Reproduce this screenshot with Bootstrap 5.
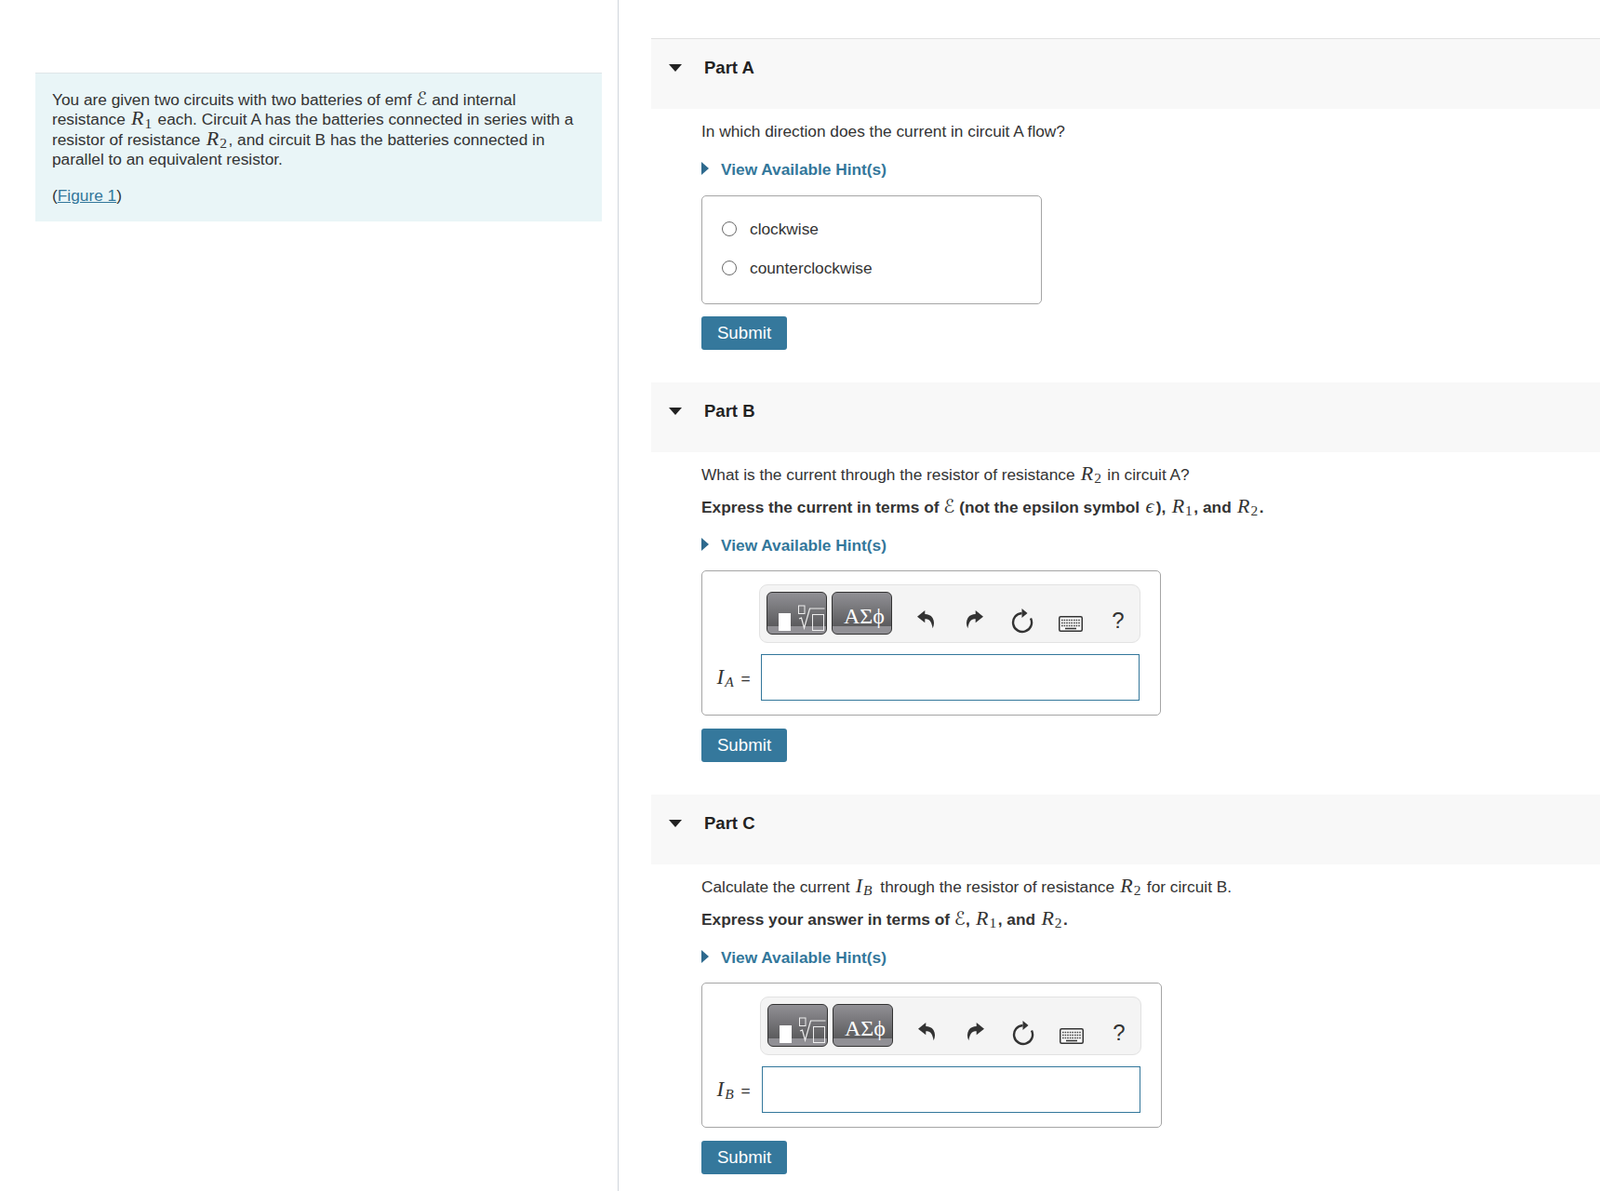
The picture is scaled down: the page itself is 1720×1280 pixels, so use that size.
<!DOCTYPE html>
<html lang="en">
<head>
    <meta charset="UTF-8">
    <meta name="viewport" content="width=device-width, initial-scale=1.0">
    <title>Circuits</title>
    <link rel="stylesheet" href="https://cdn.jsdelivr.net/npm/bootstrap@5.3.0/dist/css/bootstrap.min.css">
    <style>
        body { font-family: "Liberation Sans", Arial, sans-serif; font-size: 17.3px; color: #333; background: #fff; }
        .page-wrap { height: 1280px; overflow: hidden; }
        .left-col { width: 665px; flex: none; border-right: 1px solid #d0d5dc; padding: 78px 17px 0 38px; }
        .intro-box { background: #e9f5f7; border-top: 1px solid #dfe5e8; padding: 18px 17px 14px 18px; height: 160px; line-height: 21.4px; }
        .intro-box p { margin: 0 0 17px; }
        .intro-box a { color: #33779b; }
        .right-col { padding: 41px 0 0 35px; min-width: 0; }
        .part-head { height: 75px; background: #f8f8f8; padding: 18px 0 0 19px; font-size: 18.5px; font-weight: 700; line-height: 26px; color: #222; }
        .part-first { height: 76px; border-top: 1px solid #e1e1e1; }
        .caret-down { width: 0; height: 0; border-left: 7px solid transparent; border-right: 7px solid transparent; border-top: 8px solid #222; margin: 9px 24px 0 0; }
        .part-body { padding: 12px 0 35px 54px; }
        .part-body p { line-height: 24px; margin: 0 0 11px; }
        .hint-row { color: #33779b; font-weight: 700; line-height: 24px; margin: 17px 0 16px; }
        .caret-right { width: 0; height: 0; border-top: 7px solid transparent; border-bottom: 7px solid transparent; border-left: 8px solid #2e6a8e; margin: -3px 13px 0 0; }
        .choice-box { width: 366px; height: 117px; border: 1px solid #a5a5a5; border-radius: 5px; padding: 14px 0 0 21px; margin-bottom: 13px; }
        .choice-row { height: 42px; }
        .choice-row .form-check-input { width: 16px; height: 16px; margin: 0 14px 0 0; border: 1px solid #6a6a6a; flex: none; }
        .choice-row label { line-height: 24px; }
        .answer-box { width: 494px; height: 156px; border: 1px solid #a5a5a5; border-radius: 5px; padding: 14px 0 0 13px; margin: -1px 0 14px; }
        .answer-wide { width: 495px; }
        .tool-strip { width: 410px; height: 63px; margin-left: 48px; background: #f4f4f4; border: 1px solid #e2e2e2; border-radius: 9px; padding: 7px 0 0 7px; }
        .answer-wide .tool-strip { margin-left: 49px; }
        .tool-btn { width: 65px; height: 46px; flex: none; padding: 5px 0 0 5px; border: 1px solid #333; border-radius: 6px; color: #fff; background: linear-gradient(#919095, #5b5b5d 82%, #919095 82%); font-family: "Liberation Serif", serif; font-size: 24px; line-height: 38px; margin-right: 5px; }
        .tool-btn-tpl { padding: 0; }
        .tool-btn svg { display: block; }
        .tool-slot { width: 52px; height: 46px; flex: none; color: #333; font-size: 24px; line-height: 30px; }
        .tool-gap { width: 5px; flex: none; }
        .ico-arrow { margin-top: 20px; }
        .ico-reload { margin-top: 18px; }
        .ico-keys { margin-top: 26px; }
        .ico-help { margin-top: 16px; margin-left: -2px; }
        .answer-row { margin-top: 12px; }
        .var-label { width: 50px; flex: none; padding: 3px 0 0 1px; white-space: nowrap; }
        .var-label .mth { font-size: 23px; margin-right: 2px; }
        .answer-wide .var-label { width: 51px; }
        .answer-input { width: 407px; height: 50px; border: 1px solid #33779b; border-radius: 0; padding: 0 8px; background: #fff; }
        .submit-btn { width: 92px; height: 36px; padding: 0; background: #35789c; border: 0; border-radius: 3px; color: #fff; font-size: 18.7px; line-height: 36px; }
        .submit-btn:hover { background: #2e6a8e; color: #fff; }
        .mth { font-family: "Liberation Serif", "DejaVu Serif", serif; font-weight: 400; font-size: 22px; line-height: 0; white-space: nowrap; margin: 0 1.5px; }
        .mth i { font-style: italic; letter-spacing: 1px; }
        .mth-cur { margin-right: 3px; }
        .mth sub { font-size: 15.5px; font-style: normal; bottom: -.2em; line-height: 0; }
        .scr { font-family: "DejaVu Sans", serif; font-size: 20px; margin: 0; }
    </style>
</head>
<body>
    <svg class="d-none">
        <symbol id="ico-undo" viewBox="0 0 19 20"><path d="M8.300 0 0 6.700l8.300 6.600V9.300c3.700 0 6.700.7 8.400 10 1.800-4.300 1.800-7.300-.2-11.300-2-3-5-4-8.200-4z" fill="#333"/></symbol>
        <symbol id="ico-redo" viewBox="0 0 19 20"><path d="M10.700 0 19 6.700l-8.300 6.600V9.300c-3.700 0-6.700.7-8.400 10-1.800-4.300-1.800-7.300.2-11.300 2-3 5-4 8.200-4z" fill="#333"/></symbol>
        <symbol id="ico-reload" viewBox="0 0 24 28"><path d="M11.500 5A10 10 0 1 0 21 10.500" fill="none" stroke="#333" stroke-width="2.400"/><path d="M11.500 0l6 5-6 5z" fill="#333"/></symbol>
        <symbol id="ico-keys" viewBox="0 0 26 17"><rect x=".75" y=".75" width="24.500" height="15.500" rx="1.500" fill="#f8f8f8" stroke="#333" stroke-width="1.500"/><path d="M3 4.500h20M3 7.500h20M3 10.500h20" stroke="#444" stroke-width="1.300" stroke-dasharray="1.600 1"/><path d="M7 13.500h12" stroke="#333" stroke-width="1.500"/></symbol>
        <symbol id="ico-tpl" viewBox="0 0 63 44"><rect x="12" y="22" width="13" height="19" fill="#fff"/><rect x="33.500" y="14" width="6.500" height="8.500" fill="none" stroke="#eee"/><path d="M34 28l2.500-1 3 11 6-21h16" fill="none" stroke="#eee" stroke-width="1.200"/><rect x="48.500" y="23.500" width="12" height="17" fill="none" stroke="#eee"/></symbol>
    </svg>

    <div class="d-flex page-wrap">
        <aside class="left-col">
            <div class="intro-box">
                <p>You are given two circuits with two batteries of emf <span class="mth scr">ℰ</span> and internal resistance <span class="mth"><i>R</i><sub>1</sub></span> each. Circuit A has the batteries connected in series with a resistor of resistance <span class="mth"><i>R</i><sub>2</sub></span>, and circuit B has the batteries connected in parallel to an equivalent resistor.</p>
                <p>(<a href="#">Figure 1</a>)</p>
            </div>
        </aside>

        <main class="flex-grow-1 right-col">
            <!-- Part A -->
            <div class="part-head part-first d-flex align-items-start">
                <span class="caret-down"></span><span>Part A</span>
            </div>
            <div class="part-body">
                <p>In which direction does the current in circuit A flow?</p>
                <div class="hint-row d-flex align-items-center"><span class="caret-right"></span>View Available Hint(s)</div>
                <div class="choice-box">
                    <div class="choice-row d-flex align-items-center">
                        <input class="form-check-input" type="radio" name="dir" id="dirA">
                        <label for="dirA">clockwise</label>
                    </div>
                    <div class="choice-row d-flex align-items-center">
                        <input class="form-check-input" type="radio" name="dir" id="dirB">
                        <label for="dirB">counterclockwise</label>
                    </div>
                </div>
                <button class="btn submit-btn d-block">Submit</button>
            </div>

            <!-- Part B -->
            <div class="part-head d-flex align-items-start">
                <span class="caret-down"></span><span>Part B</span>
            </div>
            <div class="part-body">
                <p>What is the current through the resistor of resistance <span class="mth"><i>R</i><sub>2</sub></span> in circuit A?</p>
                <p class="fw-bold">Express the current in terms of <span class="mth scr">ℰ</span> (not the epsilon symbol <span class="mth"><i>ϵ</i></span>), <span class="mth"><i>R</i><sub>1</sub></span>, and <span class="mth"><i>R</i><sub>2</sub></span>.</p>
                <div class="hint-row d-flex align-items-center"><span class="caret-right"></span>View Available Hint(s)</div>
                <div class="answer-box">
                    <div class="tool-strip d-flex">
                        <button class="tool-btn tool-btn-tpl" aria-label="Templates"><svg width="63" height="44"><use href="#ico-tpl"/></svg></button>
                        <button class="tool-btn">ΑΣϕ</button>
                        <span class="tool-gap"></span>
                        <span class="tool-slot d-flex justify-content-center"><svg class="ico-arrow" width="19" height="20"><use href="#ico-undo"/></svg></span>
                        <span class="tool-slot d-flex justify-content-center"><svg class="ico-arrow" width="19" height="20"><use href="#ico-redo"/></svg></span>
                        <span class="tool-slot d-flex justify-content-center"><svg class="ico-reload" width="24" height="28"><use href="#ico-reload"/></svg></span>
                        <span class="tool-slot d-flex justify-content-center"><svg class="ico-keys" width="26" height="17"><use href="#ico-keys"/></svg></span>
                        <span class="tool-slot text-center"><span class="d-block ico-help">?</span></span>
                    </div>
                    <div class="answer-row d-flex align-items-center">
                        <span class="var-label"><span class="mth"><i>I</i><sub><i>A</i></sub></span> =</span>
                        <input class="answer-input" type="text">
                    </div>
                </div>
                <button class="btn submit-btn d-block">Submit</button>
            </div>

            <!-- Part C -->
            <div class="part-head d-flex align-items-start">
                <span class="caret-down"></span><span>Part C</span>
            </div>
            <div class="part-body">
                <p>Calculate the current <span class="mth mth-cur"><i>I</i><sub><i>B</i></sub></span> through the resistor of resistance <span class="mth"><i>R</i><sub>2</sub></span> for circuit B.</p>
                <p class="fw-bold">Express your answer in terms of <span class="mth scr">ℰ</span>, <span class="mth"><i>R</i><sub>1</sub></span>, and <span class="mth"><i>R</i><sub>2</sub></span>.</p>
                <div class="hint-row d-flex align-items-center"><span class="caret-right"></span>View Available Hint(s)</div>
                <div class="answer-box answer-wide">
                    <div class="tool-strip d-flex">
                        <button class="tool-btn tool-btn-tpl" aria-label="Templates"><svg width="63" height="44"><use href="#ico-tpl"/></svg></button>
                        <button class="tool-btn">ΑΣϕ</button>
                        <span class="tool-gap"></span>
                        <span class="tool-slot d-flex justify-content-center"><svg class="ico-arrow" width="19" height="20"><use href="#ico-undo"/></svg></span>
                        <span class="tool-slot d-flex justify-content-center"><svg class="ico-arrow" width="19" height="20"><use href="#ico-redo"/></svg></span>
                        <span class="tool-slot d-flex justify-content-center"><svg class="ico-reload" width="24" height="28"><use href="#ico-reload"/></svg></span>
                        <span class="tool-slot d-flex justify-content-center"><svg class="ico-keys" width="26" height="17"><use href="#ico-keys"/></svg></span>
                        <span class="tool-slot text-center"><span class="d-block ico-help">?</span></span>
                    </div>
                    <div class="answer-row d-flex align-items-center">
                        <span class="var-label"><span class="mth"><i>I</i><sub><i>B</i></sub></span> =</span>
                        <input class="answer-input" type="text">
                    </div>
                </div>
                <button class="btn submit-btn d-block">Submit</button>
            </div>
        </main>
    </div>
    <script src="https://cdn.jsdelivr.net/npm/bootstrap@5.3.0/dist/js/bootstrap.bundle.min.js"></script>
</body>
</html>
